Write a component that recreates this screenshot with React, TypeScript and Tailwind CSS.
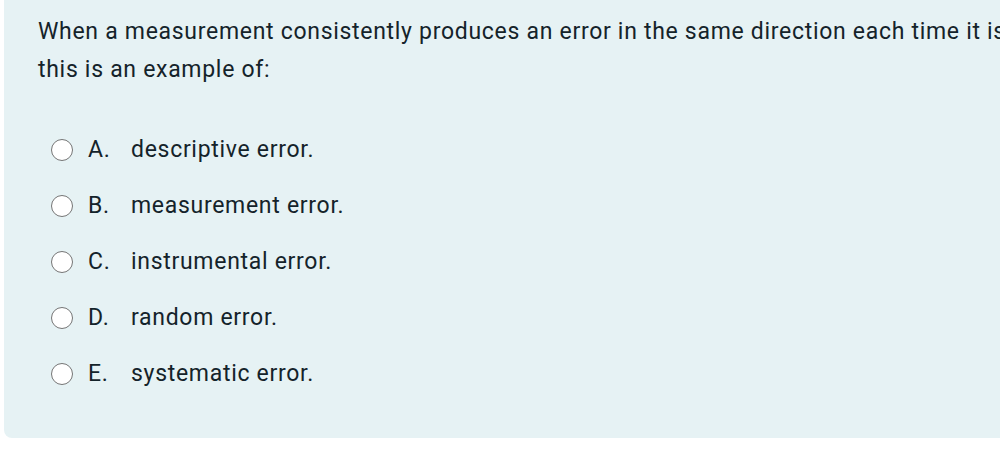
import React from 'react';

const options = [
  { key: 'A.', text: 'descriptive error.' },
  { key: 'B.', text: 'measurement error.' },
  { key: 'C.', text: 'instrumental error.' },
  { key: 'D.', text: 'random error.' },
  { key: 'E.', text: 'systematic error.' },
];

export default function App() {
  return (
    <div className="w-[1000px] h-[453px] overflow-hidden bg-white font-['Roboto',sans-serif]">
      <div className="ml-[4px] w-[1200px] h-[438px] rounded-b-lg bg-[#e6f2f4] pl-[34px] pt-[13px]">
        {/* question */}
        <p className="whitespace-nowrap text-[23px] leading-[38px] tracking-[0.7px] text-[#14232a]">
          When a measurement consistently produces an error in the same direction each time it is used,
          <br />
          this is an example of:
        </p>
        {/* answer choices */}
        <ul className="mt-[50px] flex flex-col gap-[34px]">
          {options.map((o) => (
            <li key={o.key} className="flex items-center h-[22px] text-[23px] tracking-[0.7px] text-[#14232a]">
              <span className="ml-[13px] w-[22px] h-[22px] shrink-0 rounded-full border-[1.5px] border-[#757575] bg-white" />
              <span className="ml-[15px] w-[43px]">{o.key}</span>
              <span>{o.text}</span>
            </li>
          ))}
        </ul>
      </div>
    </div>
  );
}
